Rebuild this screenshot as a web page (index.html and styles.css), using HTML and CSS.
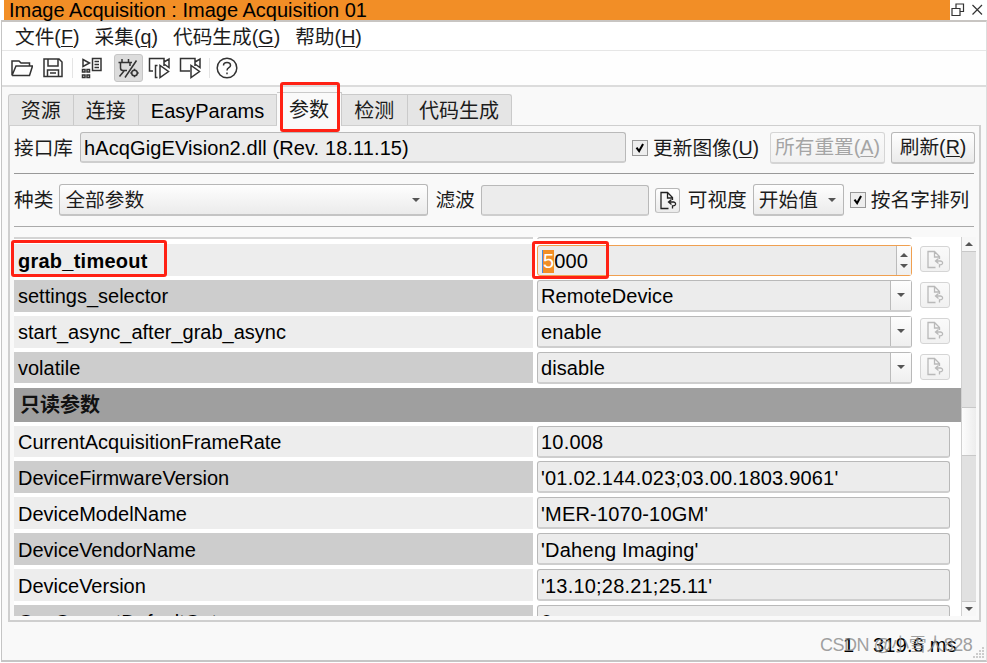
FILE: index.html
```
<!DOCTYPE html>
<html lang="zh-CN">
<head>
    <meta charset="UTF-8">
    <title>Image Acquisition</title>
    <link rel="stylesheet" href="styles.css">
</head>
<body>
    <svg class="defs">
        <symbol id="reset" viewBox="0 0 18 20">
            <path d="M9.500 17.500H2V1.500H8.500L13.500 6.500V9M8.500 1.500V7H13.500"/>
            <path d="M12.500 8.500L9.500 11 12.500 13.500M9.500 11H14.500Q17 11.500 16.500 13.500 16 15 13.500 14.800V17.500"/>
        </symbol>
    </svg>

    <header class="title-bar">
        <div class="title">Image Acquisition : Image Acquisition 01</div>
        <svg class="win-icons" viewBox="0 0 36 20">
            <path d="M2 8.500h8v7h-8zM6 8V4h7.500v7.500H10.500"/>
            <path d="M22.500 5l9.500 9.500M32 5l-9.500 9.500"/>
        </svg>
    </header>

    <div class="window">
        <nav class="menu">
            <span>文件(<u>F</u>)</span>
            <span>采集(<u>q</u>)</span>
            <span>代码生成(<u>G</u>)</span>
            <span>帮助(<u>H</u>)</span>
        </nav>

        <div class="toolbar">
            <svg class="tool-open" viewBox="0 0 22 22"><path d="M1 18.500V4H8L10 6H18.500V9M1 18.500H18.500L21.500 9H5L1 18.500"/></svg>
            <svg class="tool-save" viewBox="0 0 22 22"><path d="M2 2H17L20 5V19.500H2zM6 2V9H16V2M5.500 19V13H16.500V19M8 16H14"/></svg>
            <i class="sep"></i>
            <svg class="tool-list" viewBox="0 0 22 22">
                <path d="M2 2.500L8.500 6 2 9.500zM11.500 1.500H20V13.500H11.500zM13.500 4.500H18M13.500 7.500H18M13.500 10.500H18"/>
                <path d="M1.500 12.500H4V15H1.500zM6 12.500H8.500V15H6zM1.500 18H4V20.500H1.500zM6 18H8.500V20.500H6z"/>
            </svg>
            <button class="tool-btn">
                <svg viewBox="0 0 22 22">
                    <path d="M0.500 4.500H14M4 1V4M10.500 1V4M2.500 5V10Q2.500 12.500 5 12.500H9M12 5V8M1.500 18.500L6 13M18.500 2.500L7 19.500"/>
                    <circle cx="16.500" cy="15" r="2.800"/>
                    <path d="M16.500 10.800V12.200M16.500 17.800V19.200M12.300 15H13.700M19.300 15H20.700"/>
                </svg>
            </button>
            <svg class="tool-snap" viewBox="0 0 22 22"><path d="M5 14H1.500V1.500H16V9M16 5L21 2V10.500L16 7M9.500 8.500H7.500V20.500H9.500M12 8.500V20.500L20.500 14.500z"/></svg>
            <svg class="tool-live" viewBox="0 0 22 22"><path d="M11 14H1.500V1.500H16V9M16 5L21 2V10.500L16 7M12 8.500V20.500L20.500 14.500z"/></svg>
            <i class="sep"></i>
            <svg class="tool-help" viewBox="0 0 22 22"><circle cx="11" cy="11" r="9.800"/><path d="M7.500 8.500Q7.500 5.500 11 5.500T14.500 8.500C14.500 11 11 10.500 11 13.500M11 15.500V17.200"/></svg>
        </div>

        <div class="tabs">
            <div class="tab t1">资源</div>
            <div class="tab t1">连接</div>
            <div class="tab t2">EasyParams</div>
            <div class="tab active">参数<i class="mark mark-tab"></i></div>
            <div class="tab t1">检测</div>
            <div class="tab t3">代码生成</div>
        </div>

        <main class="panel">
            <div class="bar">
                <label>接口库</label>
                <div class="field lib">hAcqGigEVision2.dll (Rev. 18.11.15)</div>
                <i class="check"><svg viewBox="0 0 16 16"><path d="M4 7.500L7 11.500 11.500 3.500"/></svg></i>
                <label class="upd">更新图像(<u>U</u>)</label>
                <button class="btn reset-all" disabled>所有重置(<u>A</u>)</button>
                <button class="btn refresh">刷新(<u>R</u>)</button>
            </div>
            <div class="bar filter">
                <label>种类</label>
                <div class="btn select kind">全部参数<i class="down"></i></div>
                <label class="flt">滤波</label>
                <div class="field search"></div>
                <button class="btn icon-btn"><svg><use href="#reset"/></svg></button>
                <label class="vis">可视度</label>
                <div class="btn select level">开始值<i class="down"></i></div>
                <i class="check"><svg viewBox="0 0 16 16"><path d="M4 7.500L7 11.500 11.500 3.500"/></svg></i>
                <label class="sort">按名字排列</label>
            </div>

            <div class="scroll-area">
                <div class="params">
                    <div class="row above"><span class="name"></span><div class="field combo"></div></div>
                    <div class="row current">
                        <span class="name">grab_timeout<i class="mark mark-name"></i></span>
                        <div class="field spin"><b>5</b>000<span class="steps"><i class="up"></i><i class="down"></i></span><i class="mark mark-value"></i></div>
                        <button class="btn icon-btn" disabled><svg><use href="#reset"/></svg></button>
                    </div>
                    <div class="row dark">
                        <span class="name">settings_selector</span>
                        <div class="field combo">RemoteDevice<span class="arrow"><i class="down"></i></span></div>
                        <button class="btn icon-btn" disabled><svg><use href="#reset"/></svg></button>
                    </div>
                    <div class="row">
                        <span class="name">start_async_after_grab_async</span>
                        <div class="field combo">enable<span class="arrow"><i class="down"></i></span></div>
                        <button class="btn icon-btn" disabled><svg><use href="#reset"/></svg></button>
                    </div>
                    <div class="row dark">
                        <span class="name">volatile</span>
                        <div class="field combo">disable<span class="arrow"><i class="down"></i></span></div>
                        <button class="btn icon-btn" disabled><svg><use href="#reset"/></svg></button>
                    </div>
                    <div class="group">只读参数</div>
                    <div class="row readonly"><span class="name">CurrentAcquisitionFrameRate</span><div class="field">10.008</div></div>
                    <div class="row readonly dark"><span class="name">DeviceFirmwareVersion</span><div class="field">'01.02.144.023;03.00.1803.9061'</div></div>
                    <div class="row readonly"><span class="name">DeviceModelName</span><div class="field">'MER-1070-10GM'</div></div>
                    <div class="row readonly dark"><span class="name">DeviceVendorName</span><div class="field">'Daheng Imaging'</div></div>
                    <div class="row readonly"><span class="name">DeviceVersion</span><div class="field">'13.10;28.21;25.11'</div></div>
                    <div class="row readonly dark"><span class="name">GevCurrentDefaultGateway</span><div class="field">0</div></div>
                </div>
                <div class="scrollbar">
                    <div class="sb-btn"><i class="up"></i></div>
                    <div class="sb-page"></div>
                    <div class="sb-thumb"></div>
                    <div class="sb-rest"></div>
                    <div class="sb-btn"><i class="down"></i></div>
                </div>
            </div>
        </main>

        <footer class="status">
            <span class="count">1</span>
            <span class="time">319.6 ms</span>
            <span class="watermark">CSDN @小雪人828</span>
            <svg class="grip" viewBox="0 0 12 12"><path d="M9 1h2M6 4h2M9 4h2M3 7h2M6 7h2M9 7h2M0 10h2M3 10h2M6 10h2M9 10h2"/></svg>
        </footer>
    </div>
</body>
</html>
```
FILE: styles.css
```
:root {
    --orange: #f28e26;
    --line: #c5c5c5;
    --field: #ececec;
    --red: #ff2114;
}

* {
    box-sizing: border-box;
}

body {
    margin: 0;
    width: 987px;
    height: 663px;
    overflow: hidden;
    background: #fff;
    color: #000;
    font: 20px/24px "Liberation Sans", "Noto Sans CJK SC", sans-serif;
    white-space: nowrap;
}

svg {
    display: block;
    fill: none;
    stroke: #333;
    stroke-width: 1.5;
    flex: none;
}

u {
    text-decoration-thickness: 1px;
    text-underline-offset: 2px;
}

.defs {
    display: none;
}

.title-bar {
    display: flex;
    height: 20px;
    padding-left: 4px;
}

.title {
    width: 946px;
    padding-left: 5px;
    line-height: 21px;
    background: var(--orange);
}

.win-icons {
    width: 36px;
    height: 20px;
    stroke-width: 1.2;
}

.window {
    height: 642px;
    margin-left: 1px;
    border: 1px solid var(--line);
    border-top: 2px solid #c8c5c2;
    border-right-color: #ddd;
    border-bottom-width: 2px;
    background: #f9f9f9;
}

.menu {
    display: flex;
    gap: 15px;
    height: 29px;
    padding: 3px 13px 0;
    font-size: 19.7px;
    color: #1c1c1c;
    background: #fff;
    border-bottom: 1px solid #e6e6e6;
}

.toolbar {
    display: flex;
    align-items: center;
    height: 36px;
    padding-left: 9px;
    background: #fefefe;
    border-bottom: 2px solid #dcdcdc;
}

.toolbar svg {
    width: 22px;
    height: 22px;
}

.tool-save {
    margin-left: 9px;
}

.sep {
    width: 1px;
    height: 20px;
    margin: 0 8px;
    background: #e4e4e4;
}

.toolbar .tool-help {
    margin-left: -2px;
}

.tool-btn {
    width: 29px;
    height: 28px;
    margin: 0 6px 0 11px;
    padding: 3px;
    background: #dcdcdc;
    border: 1px solid #c6c6c6;
    border-radius: 3px;
}

.toolbar .tool-snap {
    margin: 0 9px 0 -1px;
}

.tabs {
    display: flex;
    align-items: flex-end;
    height: 38px;
    padding-left: 6px;
}

.tab {
    height: 31px;
    padding-top: 4px;
    color: #1c1c1c;
    text-align: center;
    background: #e5e5e5;
    border: 1px solid #cacaca;
    border-left-width: 0;
    border-bottom: 0;
}

.tab:first-child {
    border-left-width: 1px;
    border-radius: 3px 0 0 0;
}

.t1 { width: 65.5px; }
.t2 { width: 138px; color: #000; }
.t3 { width: 104px; border-radius: 0 3px 0 0; }

.tab.active {
    position: relative;
    z-index: 1;
    width: 65px;
    height: 34px;
    margin-bottom: -1px;
    padding-top: 5px;
    background: #fafafa;
}

.mark {
    position: absolute;
    border: 3px solid var(--red);
    border-radius: 3px;
    pointer-events: none;
}

.mark-tab { left: 3px; top: -11px; width: 60px; height: 50px; }
.mark-name { left: -3px; top: -4px; width: 156px; height: 37px; }
.mark-value { left: -6px; top: -5px; width: 77px; height: 38px; }

.panel {
    width: 973px;
    height: 497px;
    margin-left: 6px;
    padding: 6px 5px 0 4px;
    border: 2px solid #cfcfcf;
    border-top-width: 1px;
}

.bar {
    display: flex;
    align-items: center;
    height: 42px;
    padding-bottom: 10px;
    border-bottom: 1px solid #999;
}

.bar label {
    flex: none;
    font-size: 19.7px;
    color: #1c1c1c;
}

.bar.filter {
    height: 53px;
    padding: 0;
    border-color: #aaa;
}

.field {
    flex: none;
    height: 31px;
    padding: 3px 3px;
    letter-spacing: 0.1px;
    background: var(--field);
    border: 1px solid #b9b9b9;
    border-bottom-width: 2px;
    border-bottom-color: #cecece;
    border-radius: 3px;
}

.btn {
    flex: none;
    height: 32px;
    padding: 0;
    color: #1c1c1c;
    font: inherit;
    font-size: 19.7px;
    text-align: center;
    background: linear-gradient(#fefefe, #ebebeb);
    border: 1px solid #b7b7b7;
    border-bottom: 2px solid #c4c4c4;
    border-radius: 3px;
}

.btn:disabled {
    color: #a5a5a5;
    background: linear-gradient(#fafafa, #f1f1f1);
    border-color: #d5d5d5;
}

.lib { width: 546px; margin-left: 7px; }

.check {
    flex: none;
    width: 16px;
    height: 16px;
    margin-left: 6px;
    background: #eee;
    border: 1px solid #999;
}

.check svg {
    width: 14px;
    height: 14px;
    stroke: #000;
    stroke-width: 2.3;
}

.upd { width: 107px; margin-left: 5px; }
.reset-all { width: 115px; margin-left: 10px; }
.refresh { width: 84px; margin-left: 6px; }

.select {
    display: flex;
    align-items: center;
    justify-content: space-between;
    padding: 0 7px 0 5px;
}

.kind { width: 369px; margin-left: 6px; }
.flt { margin-left: 7px; }
.search { width: 168px; margin: 0 6px 0 6px; }
.vis { margin-left: 8px; }
.level { width: 91px; margin-left: 6px; }
.sort { margin-left: 5px; }

.icon-btn {
    width: 25px;
    height: 25px;
    padding: 1px 0 0 3px;
    border-bottom-width: 1px;
}

.icon-btn svg {
    width: 18px;
    height: 20px;
    stroke: #222;
    stroke-width: 1.3;
}

.icon-btn:disabled svg {
    stroke: #b9b9b9;
}

.up,
.down {
    width: 0;
    height: 0;
    border: 4px solid transparent;
}

.up {
    border-top: 0;
    border-bottom-color: #555;
}

.down {
    border-bottom: 0;
    border-top-color: #555;
}

/* the left padding leaves room for the red mark round the first name */
.scroll-area {
    display: flex;
    width: 966px;
    height: 379px;
    margin: 10px 0 0 -4px;
    padding-left: 4px;
    overflow: hidden;
}

.params {
    width: 947px;
    flex: none;
    background: #fff;
}

.row {
    display: grid;
    grid-template-columns: 519px 375px 30px;
    column-gap: 4px;
    align-items: start;
    height: 31.8px;
    margin-bottom: 4.1px;
}

.row .icon-btn {
    width: 30px;
    height: 26px;
    margin: 2px 0 0 4px;
    padding-left: 5px;
}

.name {
    height: 31.8px;
    padding: 4.5px 4px;
    background: #ededed;
}

.dark .name {
    background: #cdcdcd;
}

.row.above {
    height: 2px;
    overflow: hidden;
    align-items: end;
    margin-bottom: 5px;
}

.row.above .name {
    background: #d4d4d4;
}

.current .name {
    position: relative;
    font-weight: bold;
    letter-spacing: 0.25px;
}

.row.readonly {
    grid-template-columns: 519px 413px;
}

.readonly .field {
    letter-spacing: 0.2px;
}

.combo,
.spin {
    position: relative;
    padding-right: 0;
}

.row .field {
    height: 32px;
    padding-top: 3.5px;
}

.row .spin {
    height: 31px;
    margin-top: 1px;
    padding: 3px 0 0 5px;
    border: 1px solid #f0a050;
}

.spin b {
    display: inline-block;
    font-weight: normal;
    line-height: 23px;
    color: #fff;
    background: var(--orange);
    box-shadow: -1px 0 #4b8be0;
}

.arrow,
.steps {
    position: absolute;
    top: 0;
    right: 0;
    bottom: 0;
    display: grid;
    place-items: center;
    width: 21px;
    background: linear-gradient(#fdfdfd, #efefef);
    border-left: 1px solid #bbb;
}

.steps {
    width: 15px;
    padding: 3px 0;
}

.group {
    height: 34px;
    margin-bottom: 4px;
    padding: 5px 6px;
    color: #111;
    font-weight: bold;
    background: #9f9f9f;
}

.scrollbar {
    display: flex;
    flex-direction: column;
    width: 15px;
    height: 379px;
    border-left: 1px solid #d0d0d0;
}

.sb-btn {
    display: grid;
    place-items: center;
    height: 14px;
    background: #f7f7f7;
}

.sb-page {
    height: 157px;
    background: #e1e1e1;
    border: solid #c8c8c8;
    border-width: 1px 0;
}

.sb-thumb {
    height: 47px;
    background: linear-gradient(90deg, #fcfcfc, #ededed);
}

.sb-rest {
    flex: 1;
    background: #e1e1e1;
    border: solid #c8c8c8;
    border-width: 1px 0;
}

.status {
    position: relative;
    display: flex;
    height: 38px;
    padding: 11px 0 0 841px;
}

.count { width: 30px; }

.time { letter-spacing: 0.2px; }

.watermark {
    position: absolute;
    left: 818px;
    top: 11px;
    color: #888c;
    font-size: 18px;
    letter-spacing: -0.5px;
}

.grip {
    position: absolute;
    right: 1px;
    bottom: 1px;
    width: 12px;
    height: 12px;
    stroke: #ccc;
    stroke-width: 2;
}
```
